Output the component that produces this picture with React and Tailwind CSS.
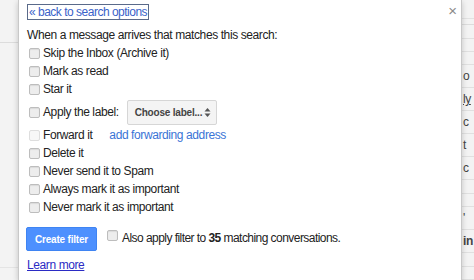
import React from "react";

function Box({ disabled }) {
  return (
    <span
      className={
        "inline-block w-[11px] h-[11px] rounded-[2px] border shrink-0 " +
        (disabled
          ? "border-[#dedede] bg-[#f7f7f7]"
          : "border-[#bdbdbd] bg-[#ededed] shadow-[inset_0_1px_1px_rgba(0,0,0,0.08)]")
      }
    />
  );
}

function Row({ children, disabled, h = "h-[18px]" }) {
  return (
    <div className={"flex items-center " + h}>
      <span className="ml-[2px] mr-[3px] flex items-center">
        <Box disabled={disabled} />
      </span>
      {children}
    </div>
  );
}

export default function App() {
  const rightRows = ["", "", "", "o", "ly", "c", "t", "c", "", "", "'", "in", "", ""];
  return (
    <div
      className="w-[474px] h-[280px] flex overflow-hidden bg-white text-[#222] text-[12px] tracking-[-0.4px]"
      style={{ fontFamily: '"Liberation Sans", Arial, sans-serif' }}
    >
      {/* left strip */}
      <div className="w-[18px] h-full bg-[#f3f3f3] flex flex-col shrink-0">
        <div className="h-[43px] border-b border-[#dcdcdc]" />
        <div className="flex-1 border-b border-[#e4e4e4] mb-[12px]" />
      </div>
      {/* dialog */}
      <div className="relative flex-1 h-full bg-white border-l border-r border-[#c8c8c8] shadow-[0_2px_6px_rgba(0,0,0,0.2)] pl-[8px] pt-[4px]">
        <span className="absolute right-[4px] top-[3px] text-[#8a8a8a] text-[15px] leading-none tracking-normal">×</span>
        <div className="h-[16px] flex">
          <span className="border border-[#5a6a8a] px-[1px] leading-[14px] text-[#3a62c9] tracking-[-0.5px]">
            « back to search options
          </span>
        </div>
        <div className="h-[23px] pt-[7px] leading-[16px] flex items-center">
          When a message arrives that matches this search:
        </div>
        <div className="pt-[1px]">
          <Row>Skip the Inbox (Archive it)</Row>
          <Row>Mark as read</Row>
          <Row>Star it</Row>
          <Row h="h-[28px]">
            <span>Apply the label:</span>
            <span className="ml-[8px] h-[25px] w-[90px] flex items-center justify-between pl-[7px] pr-[5px] border border-[#d6d6d6] rounded-[2px] bg-[#f4f4f4] text-[10px] font-bold text-[#444] tracking-[-0.2px] whitespace-nowrap">
              Choose label...
              <svg width="7" height="11" viewBox="0 0 7 11">
                <path d="M0.5 4.5 L3.5 1 L6.5 4.5 Z" fill="#555" />
                <path d="M0.5 6.5 L3.5 10 L6.5 6.5 Z" fill="#555" />
              </svg>
            </span>
          </Row>
          <Row disabled>
            <span>Forward it</span>
            <span className="ml-[17px] text-[#3a74d6]">add forwarding address</span>
          </Row>
          <Row>Delete it</Row>
          <Row>Never send it to Spam</Row>
          <Row>Always mark it as important</Row>
          <Row>Never mark it as important</Row>
        </div>
        <div className="flex items-start mt-[11px]">
          <button className="w-[71px] h-[24px] -ml-[1px] rounded-[2px] bg-[#4d90fe] border border-[#3f84f2] text-white text-[10px] font-bold tracking-[-0.2px]">
            Create filter
          </button>
          <span className="ml-[10px] mt-[1px]">
            <Box />
          </span>
          <span className="ml-[4px] leading-[20px] mt-[1px] tracking-[-0.55px]">
            Also apply filter to <b>35</b> matching conversations.
          </span>
        </div>
        <div className="mt-[6px] leading-[16px]">
          <span className="underline text-[#2b2bc4]">Learn more</span>
        </div>
      </div>
      {/* right strip */}
      <div className="w-[12px] h-full bg-[#f3f3f3] shrink-0 overflow-hidden flex flex-col">
        <div className="h-[33px] border-b border-[#e2e2e2]" />
        <div className="h-[10px] border-b border-[#dcdcdc]" />
        {rightRows.map((t, i) => (
          <div
            key={i}
            className={
              "h-[23px] border-b border-[#e0e0e0] text-[12px] leading-[22px] whitespace-nowrap pl-[1px] text-[#444] " +
              (t === "ly" ? "underline text-[#3a3a9a]" : "") +
              (t === "in" ? " font-bold" : "")
            }
          >
            {t}
          </div>
        ))}
      </div>
    </div>
  );
}
